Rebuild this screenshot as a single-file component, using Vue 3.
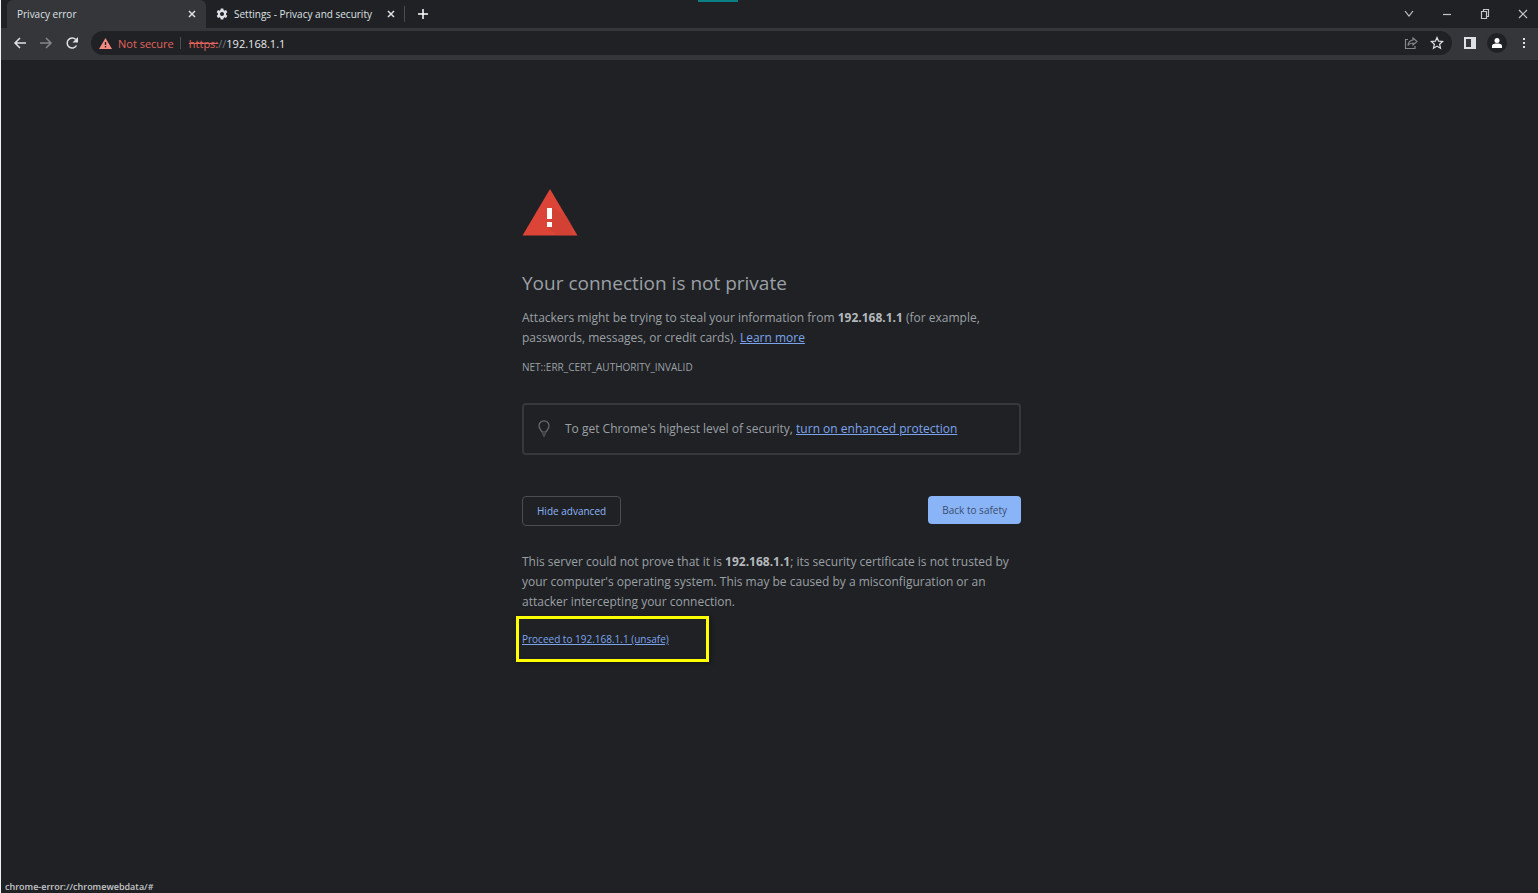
<script setup>
import { ref } from 'vue'

const address = ref('192.168.1.1')
</script>

<template>
  <div class="browser">
    <div class="share-tab"></div>
    <header>
      <div class="tab-strip">
        <div class="tab active">
          <span class="tab-title">Privacy error</span>
          <button class="close" aria-label="Close Privacy error">
            <svg width="8" height="8" viewBox="0 0 8 8"><path d="M1 1l6 6M7 1L1 7" /></svg>
          </button>
        </div>
        <div class="tab">
          <svg class="gear" width="12" height="12" viewBox="0 0 24 24">
            <path fill-rule="evenodd" d="M9.5 1h5l.6 3.2 2 1.1 3-1.1 2.5 4.4-2.4 2v2.8l2.4 2-2.5 4.4-3-1.1-2 1.1-.6 3.2h-5l-.6-3.2-2-1.1-3 1.1-2.5-4.4 2.4-2v-2.8l-2.4-2 2.5-4.4 3 1.1 2-1.1zM12 8a4 4 0 1 0 0 8 4 4 0 0 0 0-8z" />
          </svg>
          <span class="tab-title">Settings - Privacy and security</span>
          <button class="close" aria-label="Close Settings">
            <svg width="8" height="8" viewBox="0 0 8 8"><path d="M1 1l6 6M7 1L1 7" /></svg>
          </button>
        </div>
        <button class="new-tab" aria-label="New tab">
          <svg width="12" height="12" viewBox="0 0 12 12"><path d="M6 1v10M1 6h10" /></svg>
        </button>
        <div class="window-controls">
          <button aria-label="Search tabs">
            <svg width="12" height="12" viewBox="0 0 12 12"><path d="M2 3l4 5 4-5" /></svg>
          </button>
          <button aria-label="Minimize">
            <svg width="12" height="12" viewBox="0 0 12 12"><path d="M2 6.5h8" /></svg>
          </button>
          <button aria-label="Restore">
            <svg width="12" height="12" viewBox="0 0 12 12"><path d="M2.5 3.500h5v7h-5zM4.500 3.500V1.500H9.500v7H7.500" /></svg>
          </button>
          <button aria-label="Close window">
            <svg width="12" height="12" viewBox="0 0 12 12"><path d="M2 2l8 8M10 2l-8 8" /></svg>
          </button>
        </div>
      </div>

      <div class="toolbar">
        <nav>
          <button aria-label="Back">
            <svg width="14" height="14" viewBox="0 0 14 14"><path d="M13 7H2M7 2L2 7l5 5" /></svg>
          </button>
          <button class="dim" aria-label="Forward">
            <svg width="14" height="14" viewBox="0 0 14 14"><path d="M1 7h11M7 2l5 5-5 5" /></svg>
          </button>
          <button aria-label="Reload">
            <svg width="14" height="14" viewBox="0 0 14 14">
              <path d="M11.500 9.500A5 5 0 1 1 10.800 3.600" />
              <path class="solid" d="M13 1v5.500H7.500z" />
            </svg>
          </button>
        </nav>
        <div class="omnibox">
          <svg class="warn" width="13" height="11" viewBox="0 0 13 11">
            <path fill-rule="evenodd" d="M6.500 0L13 11H0zM5.800 4v3h1.400V4zM5.800 8v1.400h1.400V8z" />
          </svg>
          <span class="not-secure">Not secure</span>
          <span class="divider"></span>
          <label class="url" for="address"><s>https:</s><span>//</span></label>
          <input id="address" v-model="address" type="text" />
          <button class="dim" aria-label="Share this page">
            <svg width="14" height="14" viewBox="0 0 14 14">
              <path d="M4 3.500H1.500v9H11V10M9 2l4 3.500L9 9V7C6.500 7 5 8 4 9.500 4.300 6.500 6 4.300 9 4z" />
            </svg>
          </button>
          <button aria-label="Bookmark this tab">
            <svg width="14" height="14" viewBox="0 0 14 14">
              <path d="M7 1.500l1.600 3.700 4 .3-3 2.700.9 4L7 10.100l-3.500 2.100.9-4-3-2.700 4-.3z" />
            </svg>
          </button>
        </div>
        <div class="tools">
          <button aria-label="Side panel">
            <svg width="14" height="14" viewBox="0 0 14 14"><path class="solid" fill-rule="evenodd" d="M1 1h12v12H1zM3 3v8h5V3z" /></svg>
          </button>
          <button class="avatar" aria-label="Profile">
            <svg width="12" height="12" viewBox="0 0 12 12">
              <circle class="solid" cx="6" cy="3.500" r="2.500" />
              <path class="solid" d="M1 11V9c0-2 3-2.500 5-2.500s5 .5 5 2.500v2z" />
            </svg>
          </button>
          <button class="menu" aria-label="Menu">
            <svg width="4" height="14" viewBox="0 0 4 14"><path class="solid" d="M1 2h2v2H1zM1 6h2v2H1zM1 10h2v2H1z" /></svg>
          </button>
        </div>
      </div>
    </header>

    <main>
      <article>
        <svg class="alert" width="56" height="48" viewBox="0 0 56 48">
          <path fill="#db4437" d="M28 1l27.500 46.500H.5z" />
          <path fill="#c93f33" d="M31 20l13.500 8L50 38v9H35l-9-7z" opacity=".4" />
          <path fill="#fff" d="M25 20h5v11h-5zM25 34h5v5h-5z" />
        </svg>
        <h1>Your connection is not private</h1>
        <p>
          Attackers might be trying to steal your information from <strong>192.168.1.1</strong> (for example,
          passwords, messages, or credit cards). <a href="#">Learn more</a>
        </p>
        <p class="code">NET::ERR_CERT_AUTHORITY_INVALID</p>
        <section class="promo">
          <svg width="12" height="18" viewBox="0 0 12 18">
            <path d="M4 12C2.500 9.500 1 8.500 1 5.800a5 5 0 0 1 10 0c0 2.700-1.500 3.700-3 6.200zM4 14h4M5 16h2" />
          </svg>
          <span>To get Chrome's highest level of security, <a href="#">turn on enhanced protection</a></span>
        </section>
        <div class="actions">
          <button class="outline">Hide advanced</button>
          <button class="primary">Back to safety</button>
        </div>
        <p>
          This server could not prove that it is <strong>192.168.1.1</strong>; its security certificate is not trusted by
          your computer's operating system. This may be caused by a misconfiguration or an
          attacker intercepting your connection.
        </p>
        <div class="highlight"><a href="#">Proceed to 192.168.1.1 (unsafe)</a></div>
      </article>
    </main>
    <footer>chrome-error://chromewebdata/#</footer>
  </div>
</template>

<style>
body {
  margin: 0;
  background: #202124;
}
</style>

<style scoped>
.browser {
  position: relative;
  display: flex;
  flex-direction: column;
  box-sizing: border-box;
  min-height: 100vh;
  border-left: 1px solid #f1f1f1;
  background: #202124;
  color: #9aa0a6;
  font-family: "Open Sans", "Noto Sans", sans-serif;
  font-size: 12px;
}
button {
  display: flex;
  align-items: center;
  justify-content: center;
  padding: 0;
  border: 0;
  background: none;
  color: inherit;
  font: inherit;
}
svg {
  flex: none;
  fill: none;
  stroke: currentColor;
  stroke-width: 1.5;
}
.solid {
  fill: currentColor;
  stroke: none;
}
.share-tab {
  position: absolute;
  top: 0;
  left: 697px;
  width: 40px;
  height: 2px;
  background: #0b7f83;
}
.tab-strip {
  display: flex;
  align-items: center;
  height: 28px;
  padding-left: 6px;
  color: #dee1e6;
  font-size: 10px;
}
.tab {
  display: flex;
  align-items: center;
  box-sizing: border-box;
  width: 199px;
  height: 28px;
  padding: 0 9px 0 10px;
  border-right: 1px solid transparent;
}
.tab.active {
  border-radius: 6px 6px 0 0;
  background: #35363a;
}
.tab:not(.active) {
  height: 16px;
  border-right-color: #4a4c50;
}
.tab-title {
  flex: 1;
  white-space: nowrap;
}
.gear {
  margin-right: 6px;
  fill: #dee1e6;
  stroke: none;
}
.new-tab {
  width: 36px;
  height: 28px;
  color: #fff;
}
.window-controls {
  display: flex;
  margin-left: auto;
  color: #c4c6c9;
}
.window-controls button {
  width: 38px;
  height: 24px;
}
.window-controls button:last-child {
  padding-left: 4px;
  width: 34px;
}
.window-controls svg {
  stroke-width: 1.2;
}
.toolbar {
  display: flex;
  align-items: center;
  box-sizing: border-box;
  height: 32px;
  padding-bottom: 2px;
  background: #35363a;
  color: #dee1e6;
  font-size: 11px;
}
nav {
  display: flex;
  gap: 12px;
  padding: 0 12px;
}
.dim {
  color: #85878b;
}
.omnibox {
  display: flex;
  flex: 1;
  align-items: center;
  height: 24px;
  padding: 0 8px;
  border-radius: 12px;
  background: #202124;
}
.warn {
  fill: #f28b82;
  stroke: none;
}
.not-secure {
  margin-left: 6px;
  color: #e0645c;
}
.divider {
  width: 1px;
  height: 12px;
  margin: 0 8px 0 6px;
  background: #4a4c50;
}
.url {
  color: #777a7e;
}
.url s {
  color: #e0645c;
}
input {
  flex: 1;
  min-width: 0;
  padding: 0;
  border: 0;
  outline: 0;
  background: none;
  color: #e8eaed;
  font: inherit;
}
.omnibox button {
  margin-left: 12px;
}
.omnibox svg {
  stroke-width: 1.2;
}
.tools {
  display: flex;
  align-items: center;
  gap: 10px;
  padding: 0 7px 0 11px;
}
.avatar {
  width: 20px;
  height: 20px;
  border-radius: 50%;
  background: #202124;
  color: #fff;
}
.menu {
  width: 14px;
}
main {
  flex: 1;
  padding: 128px 0 24px 4px;
}
article {
  max-width: 499px;
  margin: 0 auto;
  line-height: 20px;
}
.alert {
  display: block;
  stroke: none;
}
h1 {
  margin: 33px 0 11px;
  font-size: 19px;
  font-weight: 400;
  line-height: 28px;
}
p {
  margin: 0 0 10px;
}
strong {
  color: #b4b8bc;
}
a {
  color: #7ba4ee;
}
.code {
  font-size: 10px;
  line-height: 18px;
}
.promo {
  display: flex;
  align-items: center;
  gap: 15px;
  box-sizing: border-box;
  height: 52px;
  margin-top: 27px;
  padding: 0 14px;
  border: 2px solid #36383c;
  border-radius: 4px;
}
.promo svg {
  stroke: #686c71;
  stroke-width: 1.2;
}
.actions {
  display: flex;
  justify-content: space-between;
  margin: 41px 0 26px;
  font-size: 10px;
}
.actions button {
  height: 30px;
  padding: 0 14px;
  border-radius: 4px;
}
.actions .outline {
  border: 1px solid #4a4d51;
  color: #8ab4f8;
}
.actions .primary {
  height: 28px;
  background: #8ab4f8;
  color: #3b4d6b;
}
.highlight {
  box-sizing: border-box;
  width: 193px;
  margin: -6px 0 0 -6px;
  padding: 10px 3px;
  border: 3px solid #ff0;
  font-size: 10px;
  box-shadow: 2px 2px 4px #17181a;
}
footer {
  position: absolute;
  bottom: 0;
  left: 4px;
  color: #c4c6c9;
  font-size: 9px;
  font-weight: 600;
  line-height: 12px;
}
</style>
